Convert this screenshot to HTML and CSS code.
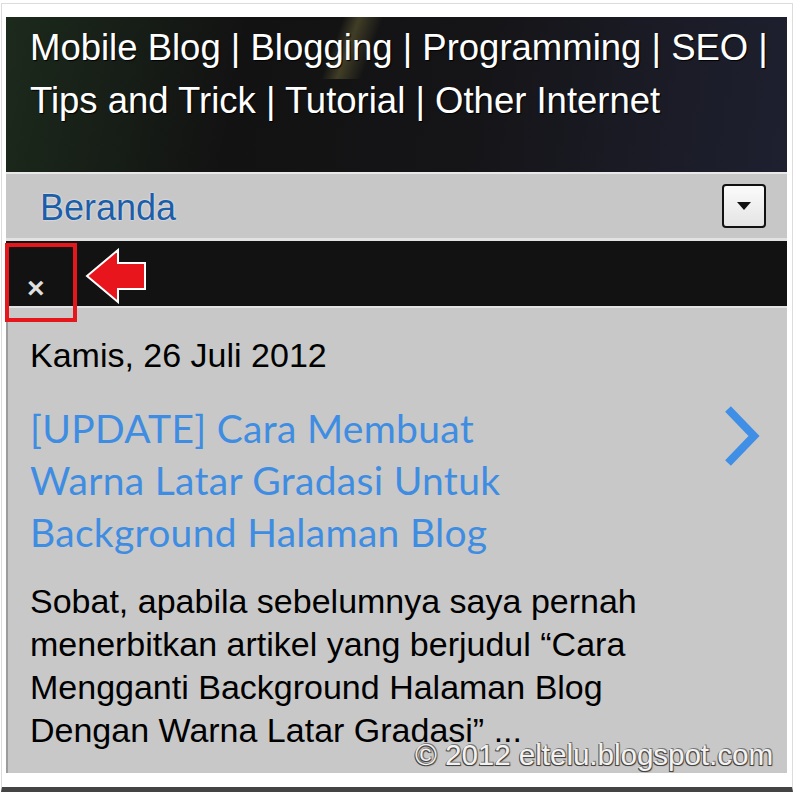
FILE: index.html
```html
<!DOCTYPE html>
<html lang="id">
<head>
    <meta charset="UTF-8">
    <meta name="viewport" content="width=device-width, initial-scale=1.0">
    <title>Mobile Blog</title>
    <link rel="stylesheet" href="styles.css">
</head>
<body>
    <div class="frame">
        <div class="blog">
            <header class="blog-header">
                <h1 class="blog-title">Mobile Blog | Blogging | Programming | SEO | Tips and Trick | Tutorial | Other Internet</h1>
            </header>

            <nav class="menu">
                <a class="menu-link" href="#">Beranda</a>
                <span class="menu-toggle">
                    <svg width="16" height="10" viewBox="0 0 16 10"><polygon points="1,1 15,1 8,9" fill="#111"/></svg>
                </span>
            </nav>

            <div class="toolbar">
                <span class="close">&times;</span>
                <!-- marco rojo y flecha que señalan el botón -->
                <div class="highlight"></div>
                <svg class="arrow" width="62" height="56" viewBox="0 0 62 56">
                    <polygon points="2,28 33,2 33,15 60,15 60,41 33,41 33,54" fill="#e8161c" stroke="#fff" stroke-width="2" stroke-linejoin="miter"/>
                </svg>
            </div>

            <main class="content">
                <p class="date">Kamis, 26 Juli 2012</p>
                <div class="post">
                    <div class="post-body">
                        <h2 class="post-title"><a href="#">[UPDATE] Cara Membuat Warna Latar Gradasi Untuk Background Halaman Blog</a></h2>
                        <p class="excerpt">Sobat, apabila sebelumnya saya pernah menerbitkan artikel yang berjudul “Cara Mengganti Background Halaman Blog Dengan Warna Latar Gradasi” ...</p>
                    </div>
                    <svg class="next" width="38" height="62" viewBox="0 0 38 62">
                        <polyline points="6,4 32,31 6,58" fill="none" stroke="#3f8fe6" stroke-width="8" stroke-linejoin="miter"/>
                    </svg>
                </div>
                <span class="watermark">© 2012 eltelu.blogspot.com</span>
            </main>
        </div>
    </div>
</body>
</html>
```

FILE: styles.css
```css
body {
    margin: 0;
    background-color: #ffffff;
    font-family: "Liberation Sans", Arial, sans-serif;
}

.frame {
    margin: 3px 7px 0 1px;
    padding: 13px 5px 14px 4px;
    border: 1px solid #dcdcdc;
    border-bottom: 5px solid #444;
}

.blog {
    display: flex;
    flex-direction: column;
}

/* cabecera oscura */
.blog-header {
    height: 155px;
    box-sizing: border-box;
    padding: 4px 8px 0 24px;
    background:
        linear-gradient(110deg, transparent 42%, rgba(150, 140, 70, 0.35) 44%, transparent 47%) top / 100% 40% no-repeat,
        linear-gradient(100deg, #1c2a1c 0%, #121212 30%, #151518 60%, #1e2030 100%);
}

.blog-title {
    margin: 0;
    font-size: 36.5px;
    font-weight: normal;
    line-height: 53px;
    color: #ffffff;
    text-shadow: 1px 1px 1px #000;
}

/* barra del menú */
.menu {
    height: 64px;
    display: flex;
    align-items: center;
    justify-content: space-between;
    padding: 0 21px 0 34px;
    background-color: #c7c7c7;
    border-top: 2px solid #e9e9e9;
    border-bottom: 3px solid #e2e2e2;
}

.menu-link {
    margin-top: 4px;
    font-size: 36px;
    color: #1d5ea8;
    text-decoration: none;
    text-shadow: 0 0 2px #ffffff;
}

.menu-toggle {
    width: 40px;
    height: 40px;
    display: flex;
    align-items: center;
    justify-content: center;
    border: 2.5px solid #111;
    border-radius: 4px;
    background: linear-gradient(#fbfbfb, #e4e4e4);
}

/* barra negra con botón de cerrar */
.toolbar {
    position: relative;
    z-index: 1;
    height: 65px;
    background-color: #121212;
    border-bottom: 2px solid #e2e2e2;
}

.close {
    display: block;
    padding: 32px 0 0 21px;
    font-size: 30px;
    font-weight: bold;
    line-height: 1;
    color: #e0e0e0;
}

.highlight {
    position: absolute;
    left: -1px;
    top: 2px;
    width: 64px;
    height: 71px;
    border: 4px solid #e5161c;
}

.arrow {
    position: absolute;
    left: 79px;
    top: 7px;
}

/* contenido */
.content {
    position: relative;
    height: 465px;
    box-sizing: border-box;
    padding: 28px 27px 0 24px;
    background-color: #c8c8c8;
    box-shadow: inset 2px 0 0 #9c9c9c;
}

.date {
    margin: 0;
    font-size: 34px;
    line-height: 38px;
    color: #000;
}

.post {
    display: flex;
    justify-content: space-between;
    margin-top: 28px;
}

.post-body {
    width: 650px;
}

.post-title {
    margin: 0;
    width: 540px;
    font-family: Lato, "Open Sans", sans-serif;
    font-size: 39px;
    font-weight: normal;
    line-height: 52px;
    letter-spacing: 0.3px;
}

.post-title a {
    color: #3f8de2;
    text-decoration: none;
}

.excerpt {
    margin: 22px 0 0;
    font-size: 34px;
    line-height: 43px;
    color: #000;
}

.next {
    margin-top: 3px;
}

.watermark {
    position: absolute;
    right: 14px;
    bottom: 3px;
    font-size: 29.5px;
    line-height: 30px;
    color: #f2f2f2;
    text-shadow: -1px 1px 0 #444, 1px -1px 0 #777, 1px 1px 1px #333;
}
```
